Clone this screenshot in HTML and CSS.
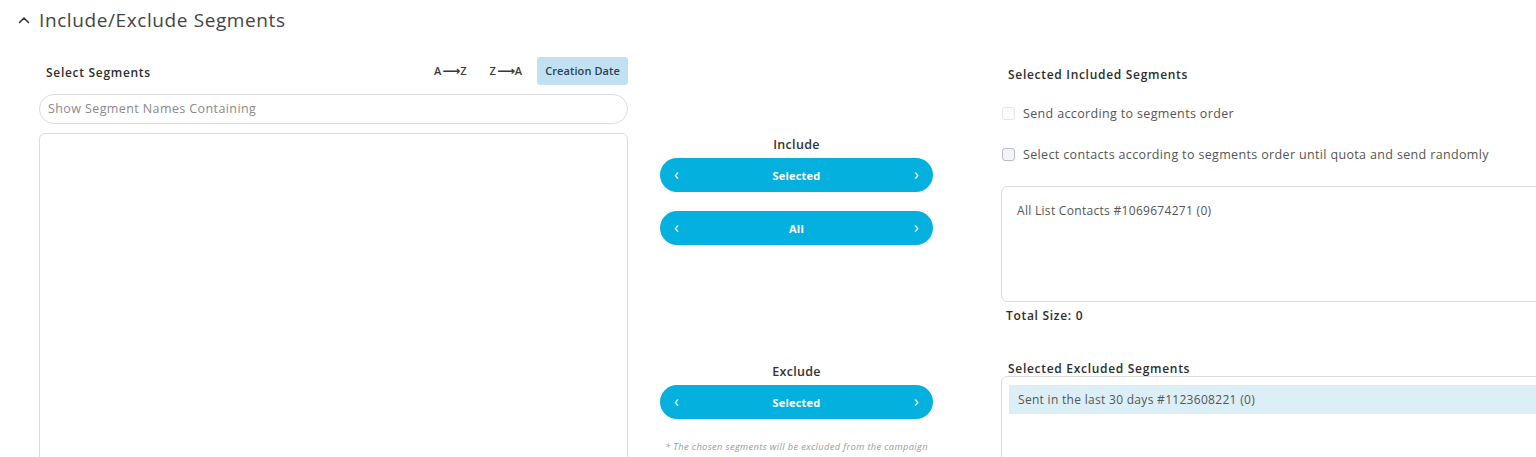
FILE: index.html
```html
<!DOCTYPE html>
<html>
<head>
<meta charset="utf-8">
<link rel="stylesheet" href="styles.css">
</head>
<body>
<div class="page">
  <div class="section-head">
    <svg class="chev" width="12" height="8" viewBox="0 0 12 8"><polyline points="1.5,6.5 6,2 10.5,6.5" fill="none" stroke="#333" stroke-width="1.6" stroke-linecap="round" stroke-linejoin="round"/></svg>
    <span class="section-title">Include/Exclude Segments</span>
  </div>
  <div class="cols">
    <div class="col-left">
      <div class="left-head">
        <span class="label sel-label">Select Segments</span>
        <div class="sorts">
          <span class="sort">A<span class="arr">⟶</span>Z</span>
          <span class="sort">Z<span class="arr">⟶</span>A</span>
          <span class="sort active">Creation Date</span>
        </div>
      </div>
      <div class="search">Show Segment Names Containing</div>
      <div class="list"></div>
    </div>
    <div class="col-mid">
      <div class="mid-label">Include</div>
      <div class="pill"><span class="ar">‹</span><span>Selected</span><span class="ar">›</span></div>
      <div class="pill pill-2"><span class="ar">‹</span><span>All</span><span class="ar">›</span></div>
      <div class="mid-label exclude-label">Exclude</div>
      <div class="pill"><span class="ar">‹</span><span>Selected</span><span class="ar">›</span></div>
      <div class="note">* The chosen segments will be excluded from the campaign</div>
    </div>
    <div class="col-right">
      <div class="label r-title">Selected Included Segments</div>
      <label class="check"><span class="box light"></span>Send according to segments order</label>
      <label class="check check-2"><span class="box"></span>Select contacts according to segments order until quota and send randomly</label>
      <div class="sel-box inc">
        <div class="item">All List Contacts #1069674271 (0)</div>
      </div>
      <div class="label total">Total Size: 0</div>
      <div class="label r-title ex-title">Selected Excluded Segments</div>
      <div class="sel-box exc">
        <div class="item hl">Sent in the last 30 days #1123608221 (0)</div>
      </div>
    </div>
  </div>
</div>
</body>
</html>
```

FILE: styles.css
```css
html, body {
  margin: 0;
  padding: 0;
  background: #fff;
  overflow: hidden;
}
body {
  font-family: "Open Sans", "Noto Sans", sans-serif;
  color: #333;
}
.page {
  width: 1560px;
  height: 457px;
  overflow: hidden;
}
.section-head {
  display: flex;
  align-items: center;
  padding: 8px 0 0 18px;
  height: 24px;
}
.chev { margin-right: 9px; }
.section-title {
  font-size: 19px;
  color: #444;
  letter-spacing: 0.6px;
}
.cols {
  display: grid;
  grid-template-columns: 621px 341px 600px;
  padding-top: 25px;
  padding-left: 39px;
}
.col-left { width: 589px; }
.label {
  font-size: 12px;
  font-weight: 600;
  color: #2d2d2d;
  letter-spacing: 0.7px;
}
.sel-label { padding-top: 3px; }
.left-head {
  display: flex;
  justify-content: space-between;
  align-items: center;
  height: 28px;
  padding-left: 7px;
}
.sorts { display: flex; align-items: center; }
.sort {
  font-size: 11px;
  font-weight: 600;
  color: #3a3a3a;
  padding: 0 11px;
  height: 28px;
  line-height: 28px;
  border-radius: 3px;
}
.sort:first-child { margin-right: 1px; }
.sort:nth-child(2) { padding-right: 15px; }
.sort .arr { font-family: "DejaVu Sans", sans-serif; font-size: 12.5px; letter-spacing: -1px; margin: 0 1px; }
.sort.active {
  background: #c1e1f2;
  color: #2b4252;
  padding: 0 8px;
  margin-left: 0;
  letter-spacing: 0.1px;
}
.search {
  margin-top: 9px;
  height: 28px;
  border: 1px solid #dcdcdc;
  border-radius: 15px;
  font-size: 12.5px;
  color: #8a8a8a;
  line-height: 28px;
  padding-left: 8px;
  letter-spacing: 0.4px;
}
.list {
  margin-top: 9px;
  height: 400px;
  border: 1px solid #dcdcdc;
  border-radius: 6px;
}
.col-mid {
  width: 273px;
  padding-top: 80px;
}
.mid-label {
  text-align: center;
  font-size: 12.5px;
  font-weight: 600;
  color: #333;
  height: 21px;
  line-height: 16px;
  letter-spacing: 0.3px;
}
.pill {
  height: 34px;
  border-radius: 17px;
  background: #04b0de;
  color: #fff;
  font-size: 11px;
  font-weight: 700;
  display: flex;
  justify-content: space-between;
  align-items: center;
  padding: 0 14px;
  letter-spacing: 0.2px;
}
.pill .ar { font-size: 16px; font-weight: 400; line-height: 1; margin-top: -3px; }
.pill-2 { margin-top: 19px; }
.exclude-label { margin-top: 119px; }
.note {
  margin-top: 21px;
  font-size: 9.3px;
  font-style: italic;
  color: #9a9a9a;
  text-align: center;
  white-space: nowrap;
  letter-spacing: 0.36px;
}
.col-right { width: 600px; padding-top: 4px; }
.r-title { padding-left: 7px; height: 28px; line-height: 28px; }
.check {
  display: flex;
  align-items: center;
  font-size: 12.5px;
  color: #555;
  margin-top: 14px;
  height: 20px;
  padding-left: 1px;
  letter-spacing: 0.35px;
}
.check-2 { margin-top: 21px; }
.box {
  width: 11px;
  height: 11px;
  border: 1px solid #b9bcc4;
  border-radius: 3px;
  margin-right: 8px;
  background: #f3f4f7;
}
.box.light { border-color: #e3e5e9; background: #fcfcfc; }
.sel-box {
  border: 1px solid #dcdcdc;
  border-radius: 6px;
  width: 560px;
}
.inc {
  margin-top: 22px;
  height: 116px;
  padding: 15px 0 0 15px;
  box-sizing: border-box;
}
.item { font-size: 12px; color: #555; letter-spacing: 0.3px; }
.total { margin-top: 6px; padding-left: 5px; height: 16px; line-height: 16px; }
.ex-title { margin-top: 37px; height: 16px; line-height: 16px; }
.exc {
  margin-top: -1px;
  height: 120px;
  padding: 8px 0 0 7px;
  box-sizing: border-box;
}
.item.hl {
  background: #ddeff6;
  height: 29px;
  line-height: 29px;
  padding-left: 9px;
}
```
